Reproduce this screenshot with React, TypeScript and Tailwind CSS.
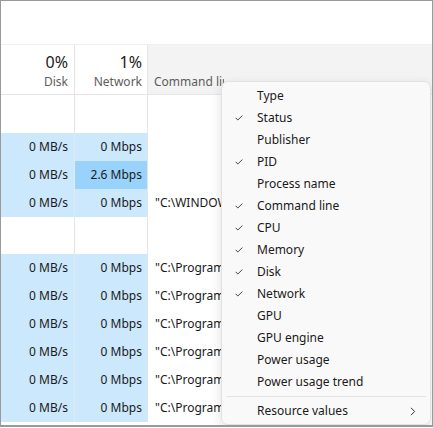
import React from "react";

const font = { fontFamily: '"Segoe UI", "Noto Sans", "Open Sans", sans-serif' };

type Row = { disk: string; net: string; cmd: string; hot?: boolean };

const top: Row[] = [
  { disk: "0 MB/s", net: "0 Mbps", cmd: "" },
  { disk: "0 MB/s", net: "2.6 Mbps", cmd: "", hot: true },
  { disk: "0 MB/s", net: "0 Mbps", cmd: '"C:\\WINDOWS\\system32\\' },
];
const bottom: Row[] = Array.from({ length: 6 }, () => ({
  disk: "0 MB/s",
  net: "0 Mbps",
  cmd: '"C:\\Program Files\\',
}));

function DataRow({ r }: { r: Row }) {
  return (
    <div className="flex h-[28px] text-[12px] text-[#1a1a1a]">
      <div className="w-[74px] shrink-0 bg-[#cce8fd] border-r border-[#dfeaf2] flex items-center justify-end pr-[6px]">
        {r.disk}
      </div>
      <div
        className={
          r.hot
            ? "w-[73px] shrink-0 bg-[#99d2fa] border-r border-[#e5e5e5] flex items-center justify-end pr-[5px]"
            : "w-[73px] shrink-0 bg-[#cce8fd] border-r border-[#e5e5e5] flex items-center justify-end pr-[5px]"
        }
      >
        {r.net}
      </div>
      <div className="flex-1 flex items-center pl-[7px]">
        <div className="w-[66px] whitespace-nowrap overflow-hidden">{r.cmd}</div>
      </div>
    </div>
  );
}

function GroupRow({ h }: { h: string }) {
  return (
    <div className={`flex ${h}`}>
      <div className="w-[74px] shrink-0 border-r border-[#e5e5e5]" />
      <div className="w-[73px] shrink-0 border-r border-[#e5e5e5]" />
      <div className="flex-1" />
    </div>
  );
}

const items: { label: string; checked?: boolean }[] = [
  { label: "Type" },
  { label: "Status", checked: true },
  { label: "Publisher" },
  { label: "PID", checked: true },
  { label: "Process name" },
  { label: "Command line", checked: true },
  { label: "CPU", checked: true },
  { label: "Memory", checked: true },
  { label: "Disk", checked: true },
  { label: "Network", checked: true },
  { label: "GPU" },
  { label: "GPU engine" },
  { label: "Power usage" },
  { label: "Power usage trend" },
];

function Check() {
  return (
    <svg width="8" height="6" viewBox="0 0 8 6" fill="none">
      <path d="M0.6 2.8 L2.8 5 L7.4 0.6" stroke="#333" strokeWidth="0.9" />
    </svg>
  );
}

export default function App() {
  return (
    <div className="w-[433px] h-[428px] bg-white overflow-hidden" style={font}>
      <div className="relative w-[433px] h-[427px] border-t border-l border-r border-b-2 border-[#9a9a9a] bg-white overflow-hidden">
        <div className="h-[43px]" />
        {/* header */}
        <div className="flex h-[51px] border-b border-[#e5e5e5] border-t border-t-[#f0f0f0]">
          <div className="w-[74px] shrink-0 border-r border-[#e5e5e5] flex flex-col items-end pr-[6px] pt-[6px]">
            <div className="text-[16px] leading-[22px] text-[#1a1a1a]">0%</div>
            <div className="text-[12px] leading-[18px] text-[#5c5c5c]">Disk</div>
          </div>
          <div className="w-[73px] shrink-0 border-r border-[#e5e5e5] flex flex-col items-end pr-[5px] pt-[6px]">
            <div className="text-[16px] leading-[22px] text-[#1a1a1a]">1%</div>
            <div className="text-[12px] leading-[18px] text-[#5c5c5c]">Network</div>
          </div>
          <div className="flex-1 bg-[#f3f3f3] flex items-end pl-[6px] pb-[3px]">
            <div className="w-[70px] text-[12px] leading-[18px] text-[#5c5c5c] whitespace-nowrap overflow-hidden">Command line</div>
          </div>
        </div>
        <GroupRow h="h-[38px]" />
        {top.map((r, i) => (
          <DataRow key={i} r={r} />
        ))}
        <GroupRow h="h-[37px]" />
        {bottom.map((r, i) => (
          <DataRow key={i} r={r} />
        ))}

        {/* context menu */}
        <div className="absolute left-[220px] top-[80px] w-[210px] h-[344px] bg-[#f9f9f9] border border-[#e2e2e2] rounded-[7px] shadow-[0_4px_12px_rgba(0,0,0,0.12)] pt-[3px] text-[12px] text-[#1a1a1a]">
          {items.map((it) => (
            <div key={it.label} className="flex items-center h-[22px]">
              <div className="w-[35px] flex justify-end pr-[14px]">{it.checked ? <Check /> : null}</div>
              <div className="whitespace-nowrap">{it.label}</div>
            </div>
          ))}
          <div className="mx-[4px] my-[3px] h-px bg-[#e3e3e3]" />
          <div className="flex items-center h-[22px]">
            <div className="w-[35px]" />
            <div className="flex-1 whitespace-nowrap">Resource values</div>
            <svg width="6" height="9" viewBox="0 0 6 9" className="mr-[14px]" fill="none">
              <path d="M1 0.8 L4.6 4.5 L1 8.2" stroke="#333" strokeWidth="1" />
            </svg>
          </div>
        </div>
      </div>
    </div>
  );
}
